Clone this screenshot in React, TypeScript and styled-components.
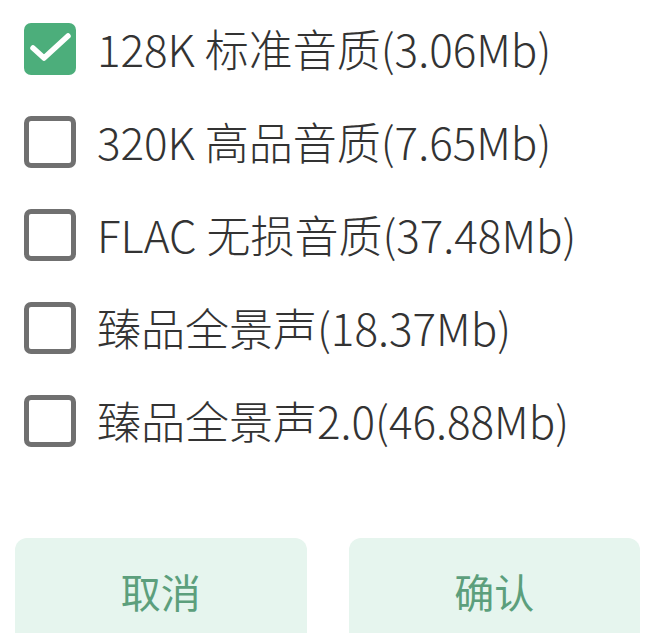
import React, { useState } from "react";
import styled, { createGlobalStyle } from "styled-components";

const GlobalStyle = createGlobalStyle`
    html, body {
        margin: 0;
        padding: 0;
        background: #ffffff;
        overflow: hidden;
    }
    body {
        font-family: "Noto Sans CJK SC", "Noto Sans", sans-serif;
    }
`

const Page = styled.div`
    width: 653px;
    height: 633px;
    display: flex;
    flex-direction: column;
`

const List = styled.div`
    display: flex;
    flex-direction: column;
    padding: 2px 0 0 24px;
`

const Row = styled.label`
    display: flex;
    align-items: center;
    height: 93px;
    gap: 21px;
    cursor: pointer;
`

const Box = styled.span<{ $checked: boolean }>`
    box-sizing: border-box;
    width: 52px;
    height: 52px;
    flex-shrink: 0;
    border-radius: 7px;
    display: flex;
    align-items: center;
    justify-content: center;
    margin-top: 1px;
    background: ${p => (p.$checked ? "#4cae7b" : "#ffffff")};
    border: ${p => (p.$checked ? "none" : "5px solid #707070")};
`

const Label = styled.span`
    font-size: 44px;
    font-weight: 300;
    color: #333333;
    white-space: nowrap;
    margin-top: -2px;
`

const Buttons = styled.div`
    display: flex;
    gap: 42px;
    padding: 0 13px 0 15px;
    margin-top: 71px;
`

const Action = styled.button`
    flex: 1;
    height: 106px;
    border: none;
    border-radius: 12px;
    background: #e6f5ee;
    color: #5c9f7c;
    font-family: "Noto Sans CJK SC", sans-serif;
    font-size: 40px;
    cursor: pointer;
`

const options = [
    "128K 标准音质(3.06Mb)",
    "320K 高品音质(7.65Mb)",
    "FLAC 无损音质(37.48Mb)",
    "臻品全景声(18.37Mb)",
    "臻品全景声2.0(46.88Mb)",
];

const Check = () => (
    <svg width="52" height="52" viewBox="0 0 52 52">
        <path d="M9 25 L20 35 L44 13" fill="none" stroke="#fff" strokeWidth="5.5" strokeLinecap="round" strokeLinejoin="round" />
    </svg>
);

const App = () => {
    const [ selected, setSelected ] = useState<number[]>([0]);

    const toggle = (i: number) => {
        setSelected(s => (s.includes(i) ? s.filter(x => x !== i) : [...s, i]));
    };

    return (
        <Page>
            <GlobalStyle />
            <List>
                {options.map((text, i) => (
                    <Row key={text} onClick={() => toggle(i)}>
                        <Box $checked={selected.includes(i)}>
                            {selected.includes(i) && <Check />}
                        </Box>
                        <Label>{text}</Label>
                    </Row>
                ))}
            </List>
            <Buttons>
                <Action>取消</Action>
                <Action>确认</Action>
            </Buttons>
        </Page>
    );
};

export default App;
